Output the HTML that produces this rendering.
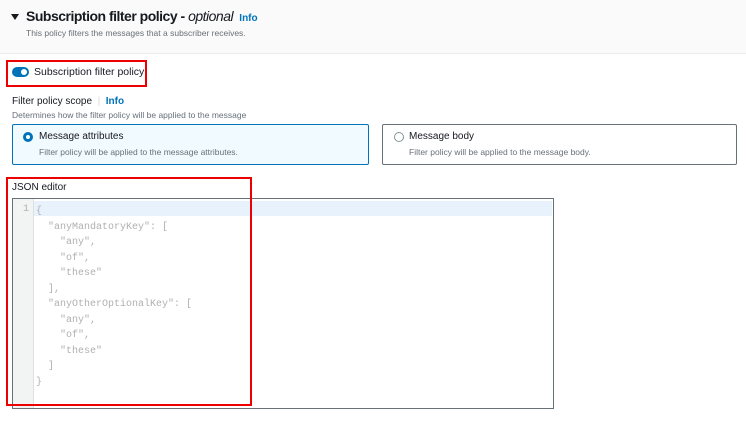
<!DOCTYPE html>
<html><head><style>
body{margin:0;width:746px;height:422px;background:#fff;font-family:"Liberation Sans",sans-serif;position:relative;overflow:hidden;color:#16191f}
.a{position:absolute;white-space:nowrap}
.mono{font-family:"Liberation Mono",monospace;font-size:10px;color:#b0b0b0}
</style></head><body>
<div class="a" style="left:0;top:0;width:746px;height:53px;background:#fafafa;border-bottom:1px solid #eaeded"></div>
<div class="a" style="left:11px;top:14px;width:0;height:0;border-left:4px solid transparent;border-right:4px solid transparent;border-top:6px solid #16191f"></div>
<div class="a" style="left:26px;top:8px;font-size:14px;font-weight:bold;letter-spacing:-0.5px">Subscription filter policy - <i style="font-weight:normal">optional</i> <span style="font-size:10px;color:#0073bb;font-weight:bold;letter-spacing:0">&nbsp;Info</span></div>
<div class="a" style="left:26px;top:28px;font-size:8.5px;color:#687078">This policy filters the messages that a subscriber receives.</div>

<div class="a" style="left:6px;top:60px;width:137px;height:23px;border:2px solid #e00"></div>
<div class="a" style="left:12px;top:67px;width:17px;height:10px;border-radius:6px;background:#0073bb"></div>
<div class="a" style="left:21px;top:69px;width:6px;height:6px;border-radius:50%;background:#fff"></div>
<div class="a" style="left:34px;top:66px;font-size:10.5px">Subscription filter policy</div>

<div class="a" style="left:12px;top:96px;font-size:10px">Filter policy scope <span style="color:#d5dbdb">&nbsp;|&nbsp;</span> <b style="color:#0073bb">Info</b></div>
<div class="a" style="left:12px;top:110px;font-size:8.5px;color:#687078">Determines how the filter policy will be applied to the message</div>

<div class="a" style="left:12px;top:124px;width:355px;height:39px;border:1px solid #0073bb;background:#f1faff;border-radius:2px"></div>
<div class="a" style="left:23px;top:132px;width:4px;height:4px;border:3px solid #0073bb;border-radius:50%;background:#fff"></div>
<div class="a" style="left:39px;top:131px;font-size:10px">Message attributes</div>
<div class="a" style="left:39px;top:147px;font-size:8.5px;color:#687078">Filter policy will be applied to the message attributes.</div>

<div class="a" style="left:382px;top:124px;width:353px;height:39px;border:1px solid #687078;border-radius:2px"></div>
<div class="a" style="left:394px;top:132px;width:8px;height:8px;border:1px solid #879596;border-radius:50%"></div>
<div class="a" style="left:409px;top:131px;font-size:10px">Message body</div>
<div class="a" style="left:409px;top:147px;font-size:8.5px;color:#687078">Filter policy will be applied to the message body.</div>

<div class="a" style="left:12px;top:182px;font-size:10px">JSON editor</div>
<div class="a" style="left:12px;top:198px;width:540px;height:209px;border:1px solid #687078"></div>
<div class="a" style="left:13px;top:199px;width:20px;height:209px;background:#f2f3f3;border-right:1px solid #e0e0e0"></div>
<div class="a" style="left:34px;top:201px;width:518px;height:15px;background:#e8f2fc"></div>
<div class="a mono" style="left:23px;top:204px">1</div>
<div class="a mono" style="left:36px;top:204px;line-height:15.5px;white-space:pre">{
  "anyMandatoryKey": [
    "any",
    "of",
    "these"
  ],
  "anyOtherOptionalKey": [
    "any",
    "of",
    "these"
  ]
}</div>
<div class="a" style="left:6px;top:177px;width:242px;height:225px;border:2px solid #e00"></div>
</body></html>
